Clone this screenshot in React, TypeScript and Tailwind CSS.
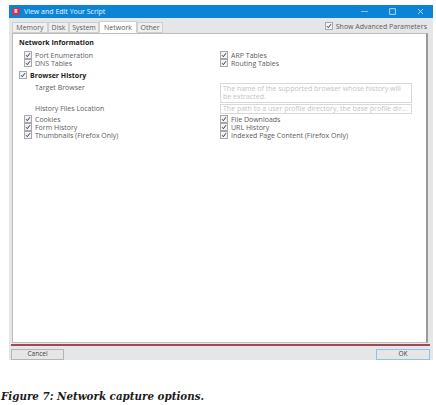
import React from "react";

const sans = { fontFamily: '"Open Sans", "Noto Sans", sans-serif' };

function Check({ label, bold }: { label: string; bold?: boolean }) {
  return (
    <div className={`flex items-center h-2 gap-[3px] text-[7px] leading-none whitespace-nowrap ${bold ? "font-bold text-[#222]" : "text-[#5c5c5c]"}`}>
      <svg width="8" height="8" viewBox="0 0 8 8" className="shrink-0">
        <rect x="0.5" y="0.5" width="7" height="7" fill="#f2f2f2" stroke="#a8a8a8" />
        <path d="M2 4.2 L3.3 5.7 L6 2.2" fill="none" stroke="#2b3a66" strokeWidth="1" />
      </svg>
      <span>{label}</span>
    </div>
  );
}

function Tab({ label, width, active }: { label: string; width: string; active?: boolean }) {
  return (
    <div className={`${width} flex items-center justify-center border border-[#cfcfcf] text-[7px] leading-none text-[#5c5c5c] ${active ? "h-[12px] bg-white border-b-white" : "h-[11px] bg-[#eef0f0]"}`}>
      {label}
    </div>
  );
}

export default function App() {
  return (
    <div className="w-[436px] h-[405px] bg-white overflow-hidden" style={sans}>
      <div className="h-[5px]" />
      <div className="ml-[9px] w-[424px] h-[355px] bg-[#e4e6e7] flex flex-col">
        <div className="h-[13px] bg-[#0b84d6] flex items-center pl-[3px] text-[#e8f4fc] text-[7px] leading-none shrink-0">
          <div className="w-[8px] h-[7px] bg-[#c23a5a] mr-[4px] flex items-center justify-center text-[5px] font-bold text-white">R</div>
          <span>View and Edit Your Script</span>
          <div className="ml-auto flex items-center gap-[21px] pr-[9px]">
            <svg width="7" height="7" viewBox="0 0 7 7"><path d="M0 3.5H7" stroke="#9fd2f3" strokeWidth="0.8" /></svg>
            <svg width="7" height="7" viewBox="0 0 7 7"><rect x="0.7" y="0.7" width="5.6" height="5.6" fill="none" stroke="#d4ecfb" strokeWidth="0.8" /></svg>
            <svg width="7" height="7" viewBox="0 0 7 7"><path d="M1 1L6 6M6 1L1 6" stroke="#d4ecfb" strokeWidth="0.8" /></svg>
          </div>
        </div>

        <div className="h-[15px] flex items-end justify-between pl-[3px] pr-[6px] shrink-0">
          <div className="flex items-end">
            <Tab label="Memory" width="w-[36px]" />
            <Tab label="Disk" width="w-[21px]" />
            <Tab label="System" width="w-[30px]" />
            <Tab label="Network" width="w-[38px]" active />
            <Tab label="Other" width="w-[26px]" />
          </div>
          <div className="self-start mt-[4px]">
            <Check label="Show Advanced Parameters" />
          </div>
        </div>

        <div className="ml-[3px] mr-[5px] h-[310px] bg-white border border-[#bdbdbd] border-r-[#9a9a9a] border-r-2 pl-[6px] pt-[5px] shrink-0">
          <div className="text-[7px] font-bold leading-[8px] text-[#222] h-[12px]">Network Information</div>
          <div className="grid grid-cols-[196px_1fr] pl-[5px]">
            <Check label="Port Enumeration" />
            <Check label="ARP Tables" />
            <Check label="DNS Tables" />
            <Check label="Routing Tables" />
          </div>
          <div className="mt-[4px]">
            <Check label="Browser History" bold />
          </div>
          <div className="grid grid-cols-[196px_1fr] pl-[5px] mt-[4px]">
            <div className="pl-[11px] pt-[1px] text-[7px] leading-none text-[#5c5c5c]">Target Browser</div>
            <div className="w-[192px] h-[20px] border border-[#d8d8d8] text-[7px] leading-[8px] text-[#c4c4c4] px-[2px] pt-[1px] whitespace-nowrap">
              The name of the supported browser whose history will
              <br />
              be extracted.
            </div>
            <div className="pl-[11px] pt-[2px] text-[7px] leading-none text-[#5c5c5c]">History Files Location</div>
            <div className="w-[192px] h-[10px] mt-[1px] border border-[#d8d8d8] text-[7px] leading-[8px] text-[#c4c4c4] px-[2px] whitespace-nowrap overflow-hidden">
              The path to a user profile directory, the base profile dir...
            </div>
          </div>
          <div className="grid grid-cols-[196px_1fr] pl-[5px] mt-[1px]">
            <Check label="Cookies" />
            <Check label="File Downloads" />
            <Check label="Form History" />
            <Check label="URL History" />
            <Check label="Thumbnails (Firefox Only)" />
            <Check label="Indexed Page Content (Firefox Only)" />
          </div>
        </div>

        <div className="h-[2px] bg-[#a5474f] mt-[1px] ml-[2px] mr-[3px] shrink-0" />
        <div className="flex justify-between pl-[2px] pr-[3px] pt-[3px]">
          <div className="w-[53px] h-[11px] bg-[#e6e6e6] border border-[#b5b5b5] text-[6.5px] leading-none text-[#444] flex items-center justify-center">Cancel</div>
          <div className="w-[54px] h-[11px] bg-[#e6e6e6] border border-[#8fc3ea] text-[6.5px] leading-none text-[#444] flex items-center justify-center">OK</div>
        </div>
      </div>
      <div className="mt-[30px] ml-[1px] text-[10.3px] leading-[12px] font-bold italic text-[#1c1c1c] whitespace-nowrap" style={{ fontFamily: '"DejaVu Serif", serif' }}>
        Figure 7: Network capture options.
      </div>
    </div>
  );
}
